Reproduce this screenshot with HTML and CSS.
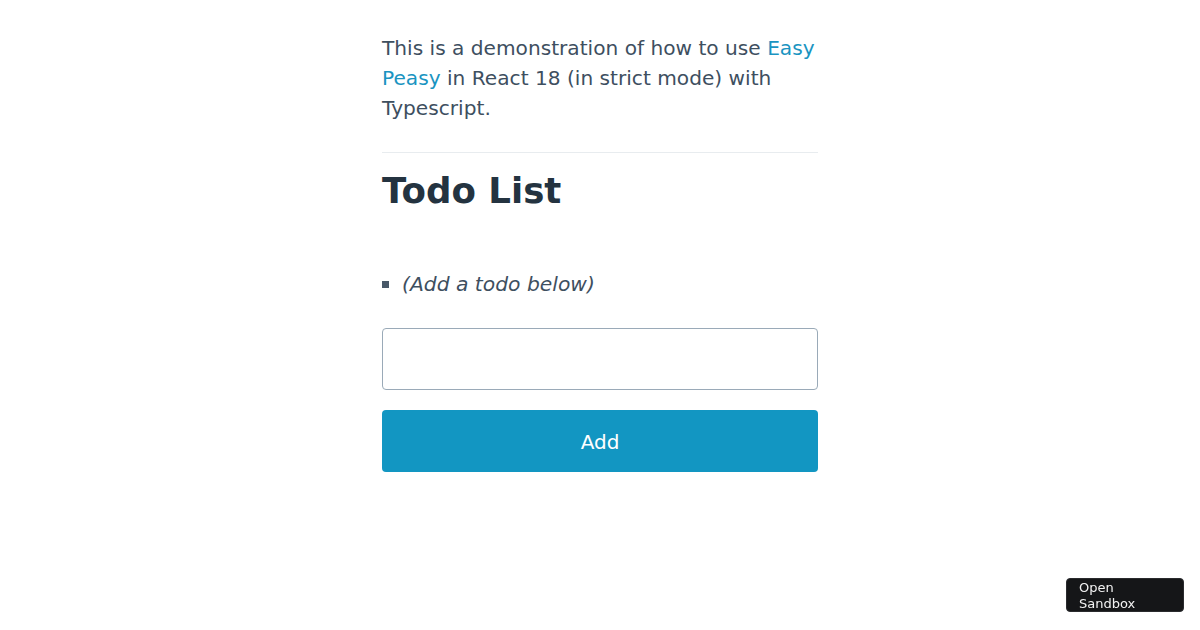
FILE: index.html
```html
<!DOCTYPE html>
<html lang="en">
<head>
<meta charset="utf-8">
<title>Easy Peasy Todo</title>
<link rel="stylesheet" href="styles.css">
</head>
<body>
<main class="container">
  <p class="intro">This is a demonstration of how to use <a href="#" class="link">Easy Peasy</a> in React 18 (in strict mode) with Typescript.</p>
  <hr class="divider">
  <h1 class="title">Todo List</h1>
  <ul class="todos">
    <li class="todo empty">(Add a todo below)</li>
  </ul>
  <form class="add-form">
    <input class="todo-input" type="text">
    <button class="add-btn" type="button">Add</button>
  </form>
</main>
<a href="#" class="sandbox-btn">Open<br>Sandbox</a>
</body>
</html>
```

FILE: styles.css
```css
html, body {
  margin: 0;
  padding: 0;
  background: #ffffff;
}
body {
  font-family: "DejaVu Sans", sans-serif;
  color: #3e4f5f;
}
.container {
  width: 436px;
  margin: 0 auto;
  padding-top: 33px;
}
.intro {
  margin: 0;
  font-size: 20.15px;
  line-height: 30px;
}
.link {
  color: #1a94c1;
  text-decoration: none;
}
.divider {
  border: 0;
  border-top: 1px solid #e8ecef;
  margin: 29px 0 17px;
}
.title {
  margin: 0;
  font-size: 35.6px;
  line-height: 42px;
  font-weight: bold;
  color: #243340;
}
.todos {
  list-style: none;
  margin: 57px 0 0;
  padding: 0;
}
.todo {
  display: flex;
  align-items: center;
  gap: 13px;
  font-size: 20.3px;
  line-height: 30px;
  font-style: italic;
  color: #3e4f5f;
}
.todo::before {
  content: "";
  width: 7px;
  height: 7px;
  background: #485868;
  flex: none;
}
.add-form {
  margin-top: 29px;
  display: flex;
  flex-direction: column;
  gap: 20px;
}
.todo-input {
  box-sizing: border-box;
  width: 100%;
  height: 62px;
  border: 1px solid #9aaab8;
  border-radius: 4px;
  font-family: inherit;
  font-size: 20px;
  padding: 0 16px;
  margin: 0;
}
.add-btn {
  box-sizing: border-box;
  width: 100%;
  height: 62px;
  border: 0;
  border-radius: 4px;
  background: #1296c2;
  color: #ffffff;
  font-family: inherit;
  font-size: 20px;
  padding: 2px 0 0;
  margin: 0;
}
.sandbox-btn {
  position: fixed;
  right: 16px;
  bottom: 18px;
  box-sizing: border-box;
  width: 118px;
  height: 34px;
  padding: 1px 12px;
  background: #151618;
  border: 1px solid #2a2b2e;
  border-radius: 4px;
  color: #f2f2f2;
  font-size: 13px;
  line-height: 16px;
  text-decoration: none;
}
```
